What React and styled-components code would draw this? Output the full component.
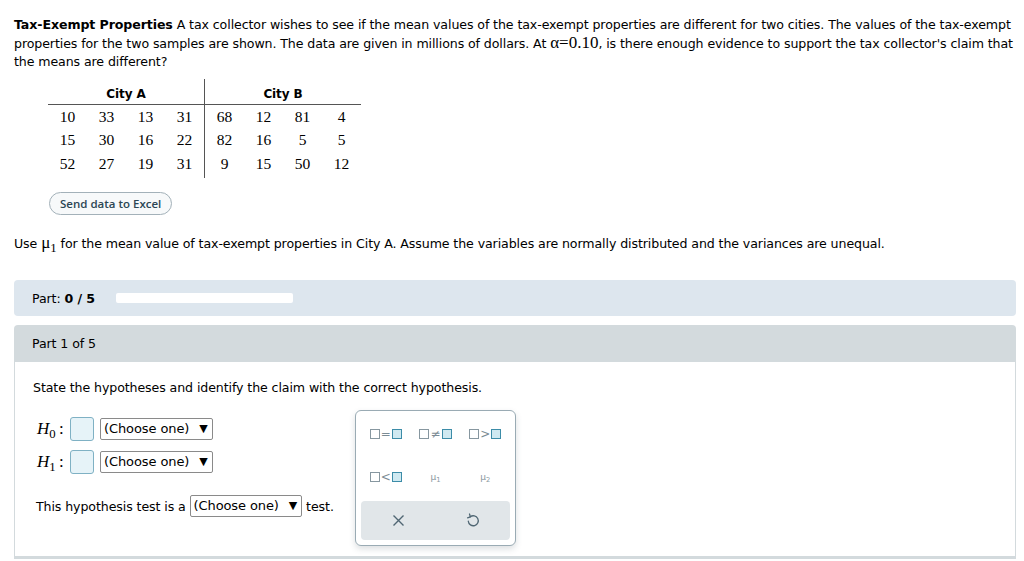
import React from "react";
import styled, { createGlobalStyle } from "styled-components";

const Global = createGlobalStyle`
  html, body { margin: 0; padding: 0; background: #fff; }
  body {
    font-family: Verdana, "DejaVu Sans", sans-serif;
    font-size: 12.6px;
    letter-spacing: -0.1px;
    color: #000;
  }
`;

const Page = styled.div`
  padding: 16px 6px 0 14px;
`;

const Intro = styled.p`
  margin: 0;
  line-height: 18px;
`;

const Serif = styled.span`
  font-family: "Liberation Serif", "Times New Roman", serif;
  font-size: ${(p) => p.$size || 16}px;
  letter-spacing: 0;
`;

const Sub = styled.sub`
  font-size: 0.75em;
  vertical-align: -0.35em;
  line-height: 0;
`;

const DataTable = styled.table`
  border-collapse: collapse;
  margin: 8px 0 0 34px;
`;

const HeadCell = styled.th`
  font-family: "DejaVu Sans", Verdana, sans-serif;
  font-size: 12px;
  font-weight: bold;
  padding: 8px 0 3px;
  border-bottom: 1px solid #555;
  ${(p) => p.$divider && "border-left: 1px solid #555;"}
`;

const NumCell = styled.td`
  font-family: "Liberation Serif", "Times New Roman", serif;
  font-size: 15.5px;
  letter-spacing: 0;
  width: 39px;
  height: 23px;
  padding: 0;
  text-align: center;
  ${(p) => p.$divider && "border-left: 1px solid #555;"}
  ${(p) => p.$last && "height: 25px; padding-bottom: 2px;"}
`;

const ExcelButton = styled.button`
  display: inline-flex;
  align-items: center;
  margin: 14px 0 0 35px;
  height: 23px;
  padding: 0 10px;
  border: 1px solid #a3b1b9;
  border-radius: 12px;
  background: #f7f9fa;
  color: #2c4654;
  font-family: "Open Sans", Lato, sans-serif;
  font-size: 11.5px;
  font-weight: 600;
  letter-spacing: 0;
`;

const UseLine = styled.p`
  margin: 19px 0 0;
  line-height: 18px;
`;

const PartBar = styled.div`
  display: flex;
  align-items: center;
  gap: 21px;
  margin: 27px 0 0;
  width: 1002px;
  height: 36px;
  padding-left: 18px;
  box-sizing: border-box;
  background: #dde6ee;
  border-radius: 4px;
`;

const Progress = styled.div`
  width: 177px;
  height: 10px;
  background: #fff;
  border-radius: 2px;
`;

const PartHead = styled.div`
  display: flex;
  align-items: center;
  margin-top: 9px;
  width: 1002px;
  height: 37px;
  padding-left: 18px;
  box-sizing: border-box;
  background: #d3dadd;
  border-radius: 4px 4px 0 0;
`;

const PartBody = styled.div`
  width: 1002px;
  height: 197px;
  box-sizing: border-box;
  border-left: 1px solid #d3dadd;
  border-right: 1px solid #d3dadd;
  border-bottom: 3px solid #d3dadd;
  padding: 17px 0 0 18px;
`;

const Prompt = styled.p`
  margin: 0;
  line-height: 18px;
`;

const WorkRow = styled.div`
  display: flex;
  align-items: flex-start;
  margin-top: 13px;
`;

const Form = styled.div`
  display: flex;
  flex-direction: column;
  width: 317px;
  padding-top: 7px;
`;

const HypRow = styled.div`
  display: flex;
  align-items: center;
  height: 24px;
  margin-bottom: 9px;
  padding-left: 4px;
`;

const HLabel = styled.span`
  display: inline-block;
  width: 33px;
  font-family: "Liberation Serif", "Times New Roman", serif;
  font-size: 17px;
  letter-spacing: 0;
`;

const AnswerBox = styled.span`
  display: inline-block;
  width: 22px;
  height: 22px;
  background: #e6f3f8;
  border: 1px solid #7fb1c4;
  border-radius: 3px;
  margin-right: 6px;
`;

const Select = styled.span`
  display: inline-flex;
  align-items: center;
  justify-content: space-between;
  gap: 10px;
  height: 20px;
  padding: 0 4px 0 3px;
  border: 1px solid #8a8a8a;
  border-radius: 2px;
  background: #fff;
  font-size: 13px;
  line-height: 20px;
`;

const Arrow = styled.span`
  font-size: 11px;
`;

const TestLine = styled.div`
  display: flex;
  align-items: center;
  margin-top: 12px;
  padding-left: 3px;
`;

const Palette = styled.div`
  width: 161px;
  height: 136px;
  box-sizing: border-box;
  margin-left: 5px;
  border: 1px solid #9aabb4;
  border-radius: 6px;
  background: #fff;
  box-shadow: 0 3px 6px rgba(60, 80, 90, 0.18);
  padding: 0 5px 5px;
  display: flex;
  flex-direction: column;
`;

const KeyGrid = styled.div`
  display: grid;
  grid-template-columns: repeat(3, 1fr);
  grid-template-rows: 43px 43px;
  padding-top: 1px;
  flex: 1;
`;

const Key = styled.div`
  display: flex;
  align-items: center;
  justify-content: center;
  gap: 1px;
  color: #7b8b94;
  font-size: 10px;
`;

const Empty = styled.span`
  display: inline-block;
  width: 8px;
  height: 8px;
  border: 1.5px solid #8797a0;
  background: #fff;
`;

const Filled = styled.span`
  display: inline-block;
  width: 8px;
  height: 8px;
  border: 1.5px solid #3c8ca8;
  background: #cfe9f1;
`;

const Op = styled.span`
  font-family: "DejaVu Sans", sans-serif;
  font-size: 12px;
  color: #7b8b94;
  line-height: 1;
  letter-spacing: 0;
`;

const Mu = styled.span`
  font-family: "DejaVu Sans", sans-serif;
  font-size: 9px;
  color: #8a98a0;
`;

const ActionBar = styled.div`
  display: flex;
  align-items: center;
  justify-content: space-around;
  height: 39px;
  background: #e1e6e9;
  border-radius: 4px;
  color: #4f6673;
`;

const IconBtn = styled.span`
  display: inline-flex;
  width: 40px;
  justify-content: center;
`;

const Choose = () => (
  <Select>
    <span>(Choose one)</span>
    <Arrow>▼</Arrow>
  </Select>
);

const cityA = [
  [10, 33, 13, 31],
  [15, 30, 16, 22],
  [52, 27, 19, 31],
];
const cityB = [
  [68, 12, 81, 4],
  [82, 16, 5, 5],
  [9, 15, 50, 12],
];

export default function App() {
  return (
    <>
      <Global />
      <Page>
        <Intro>
          <b>Tax-Exempt Properties</b> A tax collector wishes to see if the mean values of the tax-exempt
          properties are different for two cities. The values of the tax-exempt properties for the two
          samples are shown. The data are given in millions of dollars. At{" "}
          <Serif $size={17}>α=0.10</Serif>, is there enough evidence to support the tax collector's claim
          that the means are different?
        </Intro>

        <DataTable>
          <thead>
            <tr>
              <HeadCell colSpan={4}>City A</HeadCell>
              <HeadCell colSpan={4} $divider>City B</HeadCell>
            </tr>
          </thead>
          <tbody>
            {cityA.map((row, i) => (
              <tr key={i}>
                {row.map((v, j) => (
                  <NumCell key={"a" + j} $last={i === 2}>{v}</NumCell>
                ))}
                {cityB[i].map((v, j) => (
                  <NumCell key={"b" + j} $divider={j === 0} $last={i === 2}>
                    {v}
                  </NumCell>
                ))}
              </tr>
            ))}
          </tbody>
        </DataTable>

        <ExcelButton>Send data to Excel</ExcelButton>

        <UseLine>
          Use <Serif $size={17}>μ<Sub>1</Sub></Serif> for the mean value of tax-exempt properties in City A.
          Assume the variables are normally distributed and the variances are unequal.
        </UseLine>

        <PartBar>
          <span>
            Part: <b>0 / 5</b>
          </span>
          <Progress />
        </PartBar>

        <PartHead>Part 1 of 5</PartHead>
        <PartBody>
          <Prompt>State the hypotheses and identify the claim with the correct hypothesis.</Prompt>
          <WorkRow>
            <Form>
              <HypRow>
                <HLabel>
                  <i>H</i>
                  <Sub>0</Sub>&thinsp;:
                </HLabel>
                <AnswerBox />
                <Choose />
              </HypRow>
              <HypRow>
                <HLabel>
                  <i>H</i>
                  <Sub>1</Sub>&thinsp;:
                </HLabel>
                <AnswerBox />
                <Choose />
              </HypRow>
              <TestLine>
                This hypothesis test is a&nbsp;
                <Choose />
                &nbsp;test.
              </TestLine>
            </Form>
            <Palette>
              <KeyGrid>
                <Key>
                  <Empty />
                  <Op>=</Op>
                  <Filled />
                </Key>
                <Key>
                  <Empty />
                  <Op>≠</Op>
                  <Filled />
                </Key>
                <Key>
                  <Empty />
                  <Op>&gt;</Op>
                  <Filled />
                </Key>
                <Key>
                  <Empty />
                  <Op>&lt;</Op>
                  <Filled />
                </Key>
                <Key>
                  <Mu>
                    μ<Sub>1</Sub>
                  </Mu>
                </Key>
                <Key>
                  <Mu>
                    μ<Sub>2</Sub>
                  </Mu>
                </Key>
              </KeyGrid>
              <ActionBar>
                <IconBtn>
                  <svg width="13" height="13" viewBox="0 0 13 13" fill="none" stroke="currentColor" strokeWidth="1.4">
                    <path d="M1.5 1.5 L11.5 11.5 M11.5 1.5 L1.5 11.5" />
                  </svg>
                </IconBtn>
                <IconBtn>
                  <svg width="14" height="15" viewBox="0 0 14 15" fill="none" stroke="currentColor" strokeWidth="1.3" strokeLinecap="round">
                    <path d="M4.2 3.8 A5 5 0 1 1 2.3 8.2" />
                    <path d="M3.5 1 L4.4 3.9 L1.6 4.8" />
                  </svg>
                </IconBtn>
              </ActionBar>
            </Palette>
          </WorkRow>
        </PartBody>
      </Page>
    </>
  );
}
